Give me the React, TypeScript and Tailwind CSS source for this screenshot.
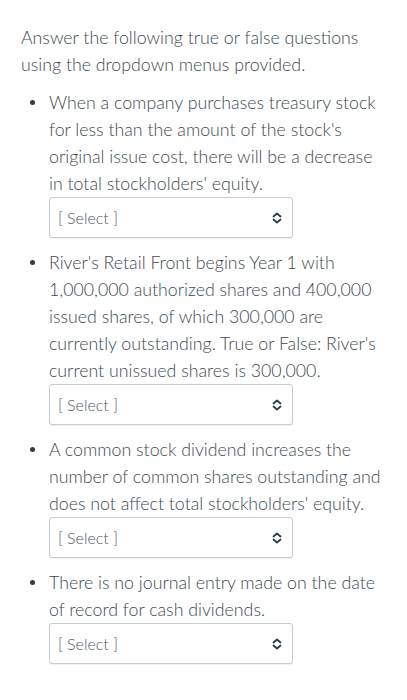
import React from 'react';

const questions = [
  "When a company purchases treasury stock for less than the amount of the stock's original issue cost, there will be a decrease in total stockholders' equity.",
  "River's Retail Front begins Year 1 with 1,000,000 authorized shares and 400,000 issued shares, of which 300,000 are currently outstanding. True or False: River's current unissued shares is 300,000.",
  "A common stock dividend increases the number of common shares outstanding and does not affect total stockholders' equity.",
  "There is no journal entry made on the date of record for cash dividends.",
];

function SelectBox() {
  return (
    <div className="flex h-[41px] w-[244px] items-center justify-between rounded-[3px] border border-[#c7cdd1] bg-white pl-[8px] pr-[10px] shadow-[0_1px_1px_rgba(0,0,0,0.06)]">
      <span className="text-[16px] font-light text-[#4f5a62]">[ Select ]</span>
      <svg width="10" height="12" viewBox="0 0 10 12" fill="none" stroke="#2d3b45" strokeWidth="1.8" strokeLinecap="round" strokeLinejoin="round">
        <path d="M1.5 4.5 L5 1.5 L8.5 4.5" />
        <path d="M1.5 7.5 L5 10.5 L8.5 7.5" />
      </svg>
    </div>
  );
}

export default function App() {
  return (
    <div className="min-h-screen bg-white pl-[21px] pr-[14px] pt-[24px] text-[#3d4a53]" style={{ fontFamily: 'Lato, "Liberation Sans", sans-serif' }}>
      <p className="text-[17.75px] font-light leading-[27px]">
        Answer the following true or false questions using the dropdown menus provided.
      </p>
      <ul className="mt-[11px] flex flex-col gap-[11px]">
        {questions.map((q, i) => (
          <li key={i} className="flex">
            <span className="flex h-[27px] w-[28px] items-center pl-[9px]">
              <span className="h-[5px] w-[5px] rounded-full bg-[#2d3b45]" />
            </span>
            <div className="w-[337px]">
              <p className="text-[17.75px] font-light leading-[27px]">{q}</p>
              <SelectBox />
            </div>
          </li>
        ))}
      </ul>
    </div>
  );
}
